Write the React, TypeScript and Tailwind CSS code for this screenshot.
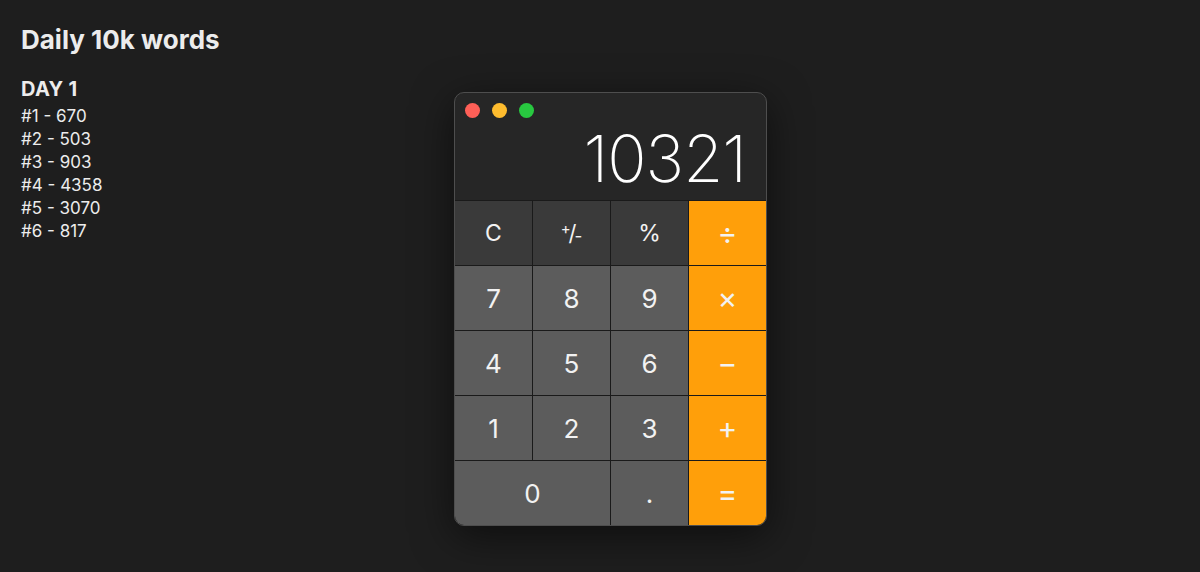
import React from "react";

const keys: { label: string; kind: "fn" | "num" | "op"; wide?: boolean }[] = [
  { label: "C", kind: "fn" },
  { label: "+/-", kind: "fn" },
  { label: "%", kind: "fn" },
  { label: "÷", kind: "op" },
  { label: "7", kind: "num" },
  { label: "8", kind: "num" },
  { label: "9", kind: "num" },
  { label: "×", kind: "op" },
  { label: "4", kind: "num" },
  { label: "5", kind: "num" },
  { label: "6", kind: "num" },
  { label: "−", kind: "op" },
  { label: "1", kind: "num" },
  { label: "2", kind: "num" },
  { label: "3", kind: "num" },
  { label: "+", kind: "op" },
  { label: "0", kind: "num", wide: true },
  { label: ".", kind: "num" },
  { label: "=", kind: "op" },
];

const entries = ["#1 - 670", "#2 - 503", "#3 - 903", "#4 - 4358", "#5 - 3070", "#6 - 817"];

function Key({ label, kind, wide }: { label: string; kind: string; wide?: boolean }) {
  const bg =
    kind === "op" ? "bg-[#ff9f0a] text-[30px]" : kind === "fn" ? "bg-[#3a3a3a] text-[23px]" : "bg-[#5c5c5c] text-[26px]";
  return (
    <div className={`flex items-center justify-center text-[#f2f2f2] ${bg} ${wide ? "col-span-2" : ""}`}>
      {label === "+/-" ? (
        <span className="flex items-center text-[22px] leading-none">
          <span className="text-[15px] -translate-y-[5px]">+</span>
          <span className="-mx-[2px]">/</span>
          <span className="text-[17px] translate-y-[3px]">-</span>
        </span>
      ) : (
        label
      )}
    </div>
  );
}

export default function App() {
  return (
    <div className="h-[572px] w-full bg-[#1e1e1e] flex font-['Inter',sans-serif] text-[#ececec] overflow-hidden">
      <div className="w-[454px] shrink-0 pl-[21px] pt-[24px]">
        <h1 className="text-[26px] font-bold leading-[32px]">Daily 10k words</h1>
        <h2 className="mt-[21px] text-[20px] font-bold leading-[24px] tracking-[0.3px]">DAY 1</h2>
        <ul className="mt-[4px] text-[17px] leading-[23px]">
          {entries.map((e) => (
            <li key={e}>{e}</li>
          ))}
        </ul>
      </div>
      <div className="mt-[92px] w-[313px] h-[434px] rounded-[10px] border border-[#4e4e4e] bg-[#262626] overflow-hidden flex flex-col shadow-[0_10px_40px_rgba(0,0,0,0.55)]">
        <div className="h-[107px] flex flex-col px-[10px] pt-[10px]">
          <div className="flex gap-[12px]">
            <span className="w-[15px] h-[15px] rounded-full bg-[#fe5f57]" />
            <span className="w-[15px] h-[15px] rounded-full bg-[#febc2e]" />
            <span className="w-[15px] h-[15px] rounded-full bg-[#28c840]" />
          </div>
          <div className="flex-1 flex items-end justify-end pr-[10px] pb-[9px]">
            <span className="text-[65px] font-extralight leading-none text-white tracking-[-1px]">10321</span>
          </div>
        </div>
        <div className="flex-1 grid grid-cols-4 grid-rows-5 gap-px bg-[#1a1a1a] pt-px">
          {keys.map((k) => (
            <Key key={k.label} {...k} />
          ))}
        </div>
      </div>
    </div>
  );
}
